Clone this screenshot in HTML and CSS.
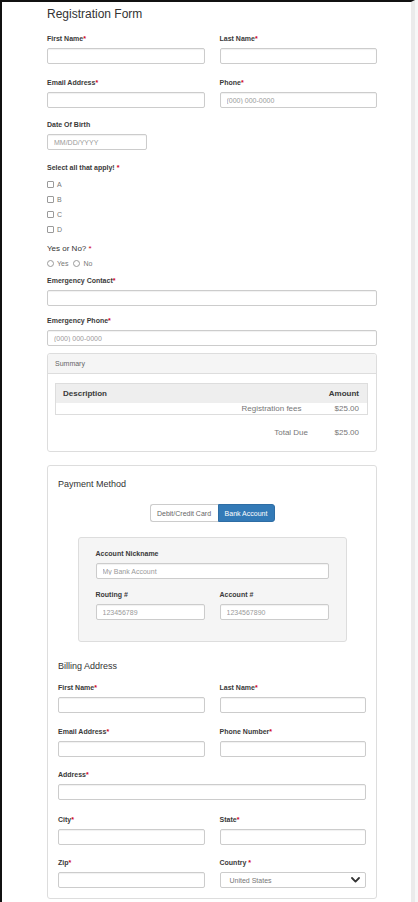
FILE: index.html
```html
<!DOCTYPE html>
<html>
<head>
<meta charset="utf-8">
<title>Registration Form</title>
<link rel="stylesheet" href="styles.css">
</head>
<body>
<div class="frame">
  <main class="form">
    <h1 class="title">Registration Form</h1>

    <div class="grid2 gap-r1">
      <div class="field"><label class="lbl">First Name<span class="req">*</span></label><input class="inp" type="text"></div>
      <div class="field"><label class="lbl">Last Name<span class="req">*</span></label><input class="inp" type="text"></div>
    </div>

    <div class="grid2 gap-r2">
      <div class="field"><label class="lbl">Email Address<span class="req">*</span></label><input class="inp" type="text"></div>
      <div class="field"><label class="lbl">Phone<span class="req">*</span></label><input class="inp" type="text" placeholder="(000) 000-0000"></div>
    </div>

    <div class="field gap-r3">
      <label class="lbl">Date Of Birth</label>
      <input class="inp inp-date" type="text" placeholder="MM/DD/YYYY">
    </div>

    <div class="field gap-r4">
      <label class="lbl lbl-tight">Select all that apply! <span class="req">*</span></label>
      <div class="checks">
        <label class="opt"><input class="box" type="checkbox"><span>A</span></label>
        <label class="opt"><input class="box" type="checkbox"><span>B</span></label>
        <label class="opt"><input class="box" type="checkbox"><span>C</span></label>
        <label class="opt"><input class="box" type="checkbox"><span>D</span></label>
      </div>
    </div>

    <div class="field gap-r5">
      <label class="lbl lbl-plain">Yes or No? <span class="req">*</span></label>
      <div class="radios">
        <label class="ropt"><input class="box round" type="radio" name="yn"><span>Yes</span></label>
        <label class="ropt"><input class="box round" type="radio" name="yn"><span>No</span></label>
      </div>
    </div>

    <div class="field gap-r6">
      <label class="lbl">Emergency Contact<span class="req">*</span></label>
      <input class="inp" type="text">
    </div>

    <div class="field gap-r7">
      <label class="lbl">Emergency Phone<span class="req">*</span></label>
      <input class="inp" type="text" placeholder="(000) 000-0000">
    </div>

    <section class="panel summary">
      <div class="panel-head">Summary</div>
      <div class="summary-body">
        <table class="tbl">
          <thead>
            <tr><th class="c-desc">Description</th><th class="c-amt">Amount</th></tr>
          </thead>
          <tbody>
            <tr><td class="c-fee">Registration fees</td><td class="c-amt">$25.00</td></tr>
          </tbody>
        </table>
        <div class="total">
          <span class="total-lbl">Total Due</span>
          <span class="total-amt">$25.00</span>
        </div>
      </div>
    </section>

    <section class="panel payment">
      <h2 class="sub">Payment Method</h2>
      <div class="toggle">
        <button class="btn btn-left" type="button">Debit/Credit Card</button>
        <button class="btn btn-right active" type="button">Bank Account</button>
      </div>

      <div class="bank">
        <div class="field">
          <label class="lbl">Account Nickname</label>
          <input class="inp" type="text" placeholder="My Bank Account">
        </div>
        <div class="grid2 bank-row">
          <div class="field"><label class="lbl">Routing #</label><input class="inp" type="text" placeholder="123456789"></div>
          <div class="field"><label class="lbl">Account #</label><input class="inp" type="text" placeholder="1234567890"></div>
        </div>
      </div>

      <h2 class="sub billing-title">Billing Address</h2>

      <div class="grid2 gap-b1">
        <div class="field"><label class="lbl">First Name<span class="req">*</span></label><input class="inp" type="text"></div>
        <div class="field"><label class="lbl">Last Name<span class="req">*</span></label><input class="inp" type="text"></div>
      </div>
      <div class="grid2 gap-b2">
        <div class="field"><label class="lbl">Email Address<span class="req">*</span></label><input class="inp" type="text"></div>
        <div class="field"><label class="lbl">Phone Number<span class="req">*</span></label><input class="inp" type="text"></div>
      </div>
      <div class="field gap-b3">
        <label class="lbl">Address<span class="req">*</span></label>
        <input class="inp" type="text">
      </div>
      <div class="grid2 gap-b4">
        <div class="field"><label class="lbl">City<span class="req">*</span></label><input class="inp" type="text"></div>
        <div class="field"><label class="lbl">State<span class="req">*</span></label><input class="inp" type="text"></div>
      </div>
      <div class="grid2 gap-b5">
        <div class="field"><label class="lbl">Zip<span class="req">*</span></label><input class="inp" type="text"></div>
        <div class="field">
          <label class="lbl">Country <span class="req">*</span></label>
          <div class="select">
            <span>United States</span>
            <svg class="chev" width="9" height="6" viewBox="0 0 9 6"><path d="M1 1 L4.5 4.6 L8 1" fill="none" stroke="#333" stroke-width="1.8" stroke-linecap="round" stroke-linejoin="round"/></svg>
          </div>
        </div>
      </div>
    </section>
  </main>
</div>
</body>
</html>
```

FILE: styles.css
```css
* { box-sizing: border-box; }

html, body {
  margin: 0;
  padding: 0;
  background: #f7f7f7;
  overflow: hidden;
}

body {
  font-family: "Liberation Sans", Arial, sans-serif;
  color: #333;
}

.frame {
  width: 415px;
  height: 902px;
  background: #fff;
  border-top: 2px solid #111;
  border-left: 2px solid #111;
  border-right: 4px solid #ebebeb;
}

.form {
  margin-left: 45px;
  width: 330px;
}

.title {
  margin: 5px 0 0;
  font-size: 12px;
  line-height: 14px;
  font-weight: normal;
  color: #333;
}

.grid2 {
  display: grid;
  grid-template-columns: 1fr 1fr;
  column-gap: 15px;
}

.field { display: block; }

.lbl {
  display: block;
  height: 12px;
  font-size: 7px;
  line-height: 12px;
  font-weight: bold;
  color: #3a3a3a;
  margin-bottom: 3px;
  white-space: nowrap;
}

.lbl-plain {
  font-size: 8px;
  font-weight: normal;
  color: #333;
  margin-bottom: 1px;
}

.lbl-tight { margin-bottom: 3px; }

.req { color: #d0021b; }

.inp {
  display: block;
  width: 100%;
  height: 16px;
  margin: 0;
  padding: 0 6px;
  border: 1px solid #ccc;
  border-radius: 2px;
  background: #fff;
  box-shadow: inset 0 1px 1px rgba(0,0,0,0.06);
  font-family: "Liberation Sans", Arial, sans-serif;
  font-size: 7px;
  color: #555;
  outline: none;
}

.inp::placeholder { color: #9a9a9a; }

.inp-date { width: 100px; }

/* vertical rhythm of the top form */
.gap-r1 { margin-top: 12px; }
.gap-r2 { margin-top: 13px; }
.gap-r3 { margin-top: 11px; }
.gap-r4 { margin-top: 12px; }
.gap-r5 { margin-top: 6px; }
.gap-r6 { margin-top: 5px; }
.gap-r7 { margin-top: 9px; }

.checks { display: flex; flex-direction: column; }

.opt, .ropt {
  display: flex;
  align-items: center;
  font-size: 7px;
  color: #777;
}

.opt { height: 15px; }

.radios {
  display: flex;
  align-items: center;
  height: 14px;
}

.ropt { margin-right: 5px; }

.box {
  appearance: none;
  -webkit-appearance: none;
  width: 7px;
  height: 7px;
  margin: 0 3px 0 0;
  border: 1px solid #9a9a9a;
  border-radius: 1px;
  background: #fff;
}

.box.round { border-radius: 50%; }

/* panels */
.panel {
  border: 1px solid #ddd;
  border-radius: 3px;
  background: #fff;
}

.summary { margin-top: 7px; }

.panel-head {
  height: 20px;
  line-height: 19px;
  padding-left: 7px;
  background: #f5f5f5;
  border-bottom: 1px solid #ddd;
  border-radius: 3px 3px 0 0;
  font-size: 7px;
  color: #666;
}

.summary-body { padding: 9px 8px 10px 7px; }

.tbl {
  width: 100%;
  border-collapse: collapse;
  border: 1px solid #ddd;
}

.tbl th {
  height: 19px;
  line-height: 19px;
  padding: 0;
  background: #eee;
  font-size: 8px;
  font-weight: bold;
  color: #3a3a3a;
}

.tbl td {
  height: 11px;
  line-height: 11px;
  padding: 0;
  font-size: 8px;
  color: #777;
}

.c-desc { text-align: left; padding-left: 7px !important; }
.c-fee { text-align: right; padding-right: 8px !important; }
.c-amt { width: 58px; text-align: right; padding-right: 8px !important; }

.total {
  display: flex;
  justify-content: flex-end;
  align-items: center;
  height: 18px;
  margin-top: 8px;
  font-size: 8px;
  color: #777;
}

.total-lbl { margin-right: 2px; }
.total-amt { width: 58px; text-align: right; padding-right: 9px; }

.payment {
  margin-top: 13px;
  padding: 12px 10px 10px 10px;
}

.sub {
  margin: 0;
  font-size: 9px;
  line-height: 12px;
  font-weight: normal;
  color: #333;
}

.toggle {
  display: flex;
  justify-content: center;
  margin-top: 14px;
}

.btn {
  height: 18px;
  margin: 0;
  padding: 0;
  border: 1px solid #ccc;
  background: #fff;
  font-family: "Liberation Sans", Arial, sans-serif;
  font-size: 7px;
  color: #666;
  text-align: center;
}

.btn-left { width: 68px; border-radius: 3px 0 0 3px; border-right: none; }
.btn-right { width: 57px; border-radius: 0 3px 3px 0; }

.btn.active {
  background: #337ab7;
  border-color: #2e6da4;
  color: #fff;
}

.bank {
  width: 269px;
  margin: 15px auto 0;
  padding: 10px 17px 21px;
  background: #f5f5f5;
  border: 1px solid #ddd;
  border-radius: 3px;
}

.bank-row { margin-top: 10px; }

.billing-title { margin-top: 18px; }

.gap-b1 { margin-top: 10px; }
.gap-b2 { margin-top: 13px; }
.gap-b3 { margin-top: 12px; }
.gap-b4 { margin-top: 14px; }
.gap-b5 { margin-top: 12px; }

.select {
  display: flex;
  align-items: center;
  justify-content: space-between;
  height: 16px;
  padding: 0 5px 0 9px;
  border: 1px solid #ccc;
  border-radius: 2px;
  background: #fff;
  font-size: 7px;
  color: #777;
}

.chev { display: block; }
```
